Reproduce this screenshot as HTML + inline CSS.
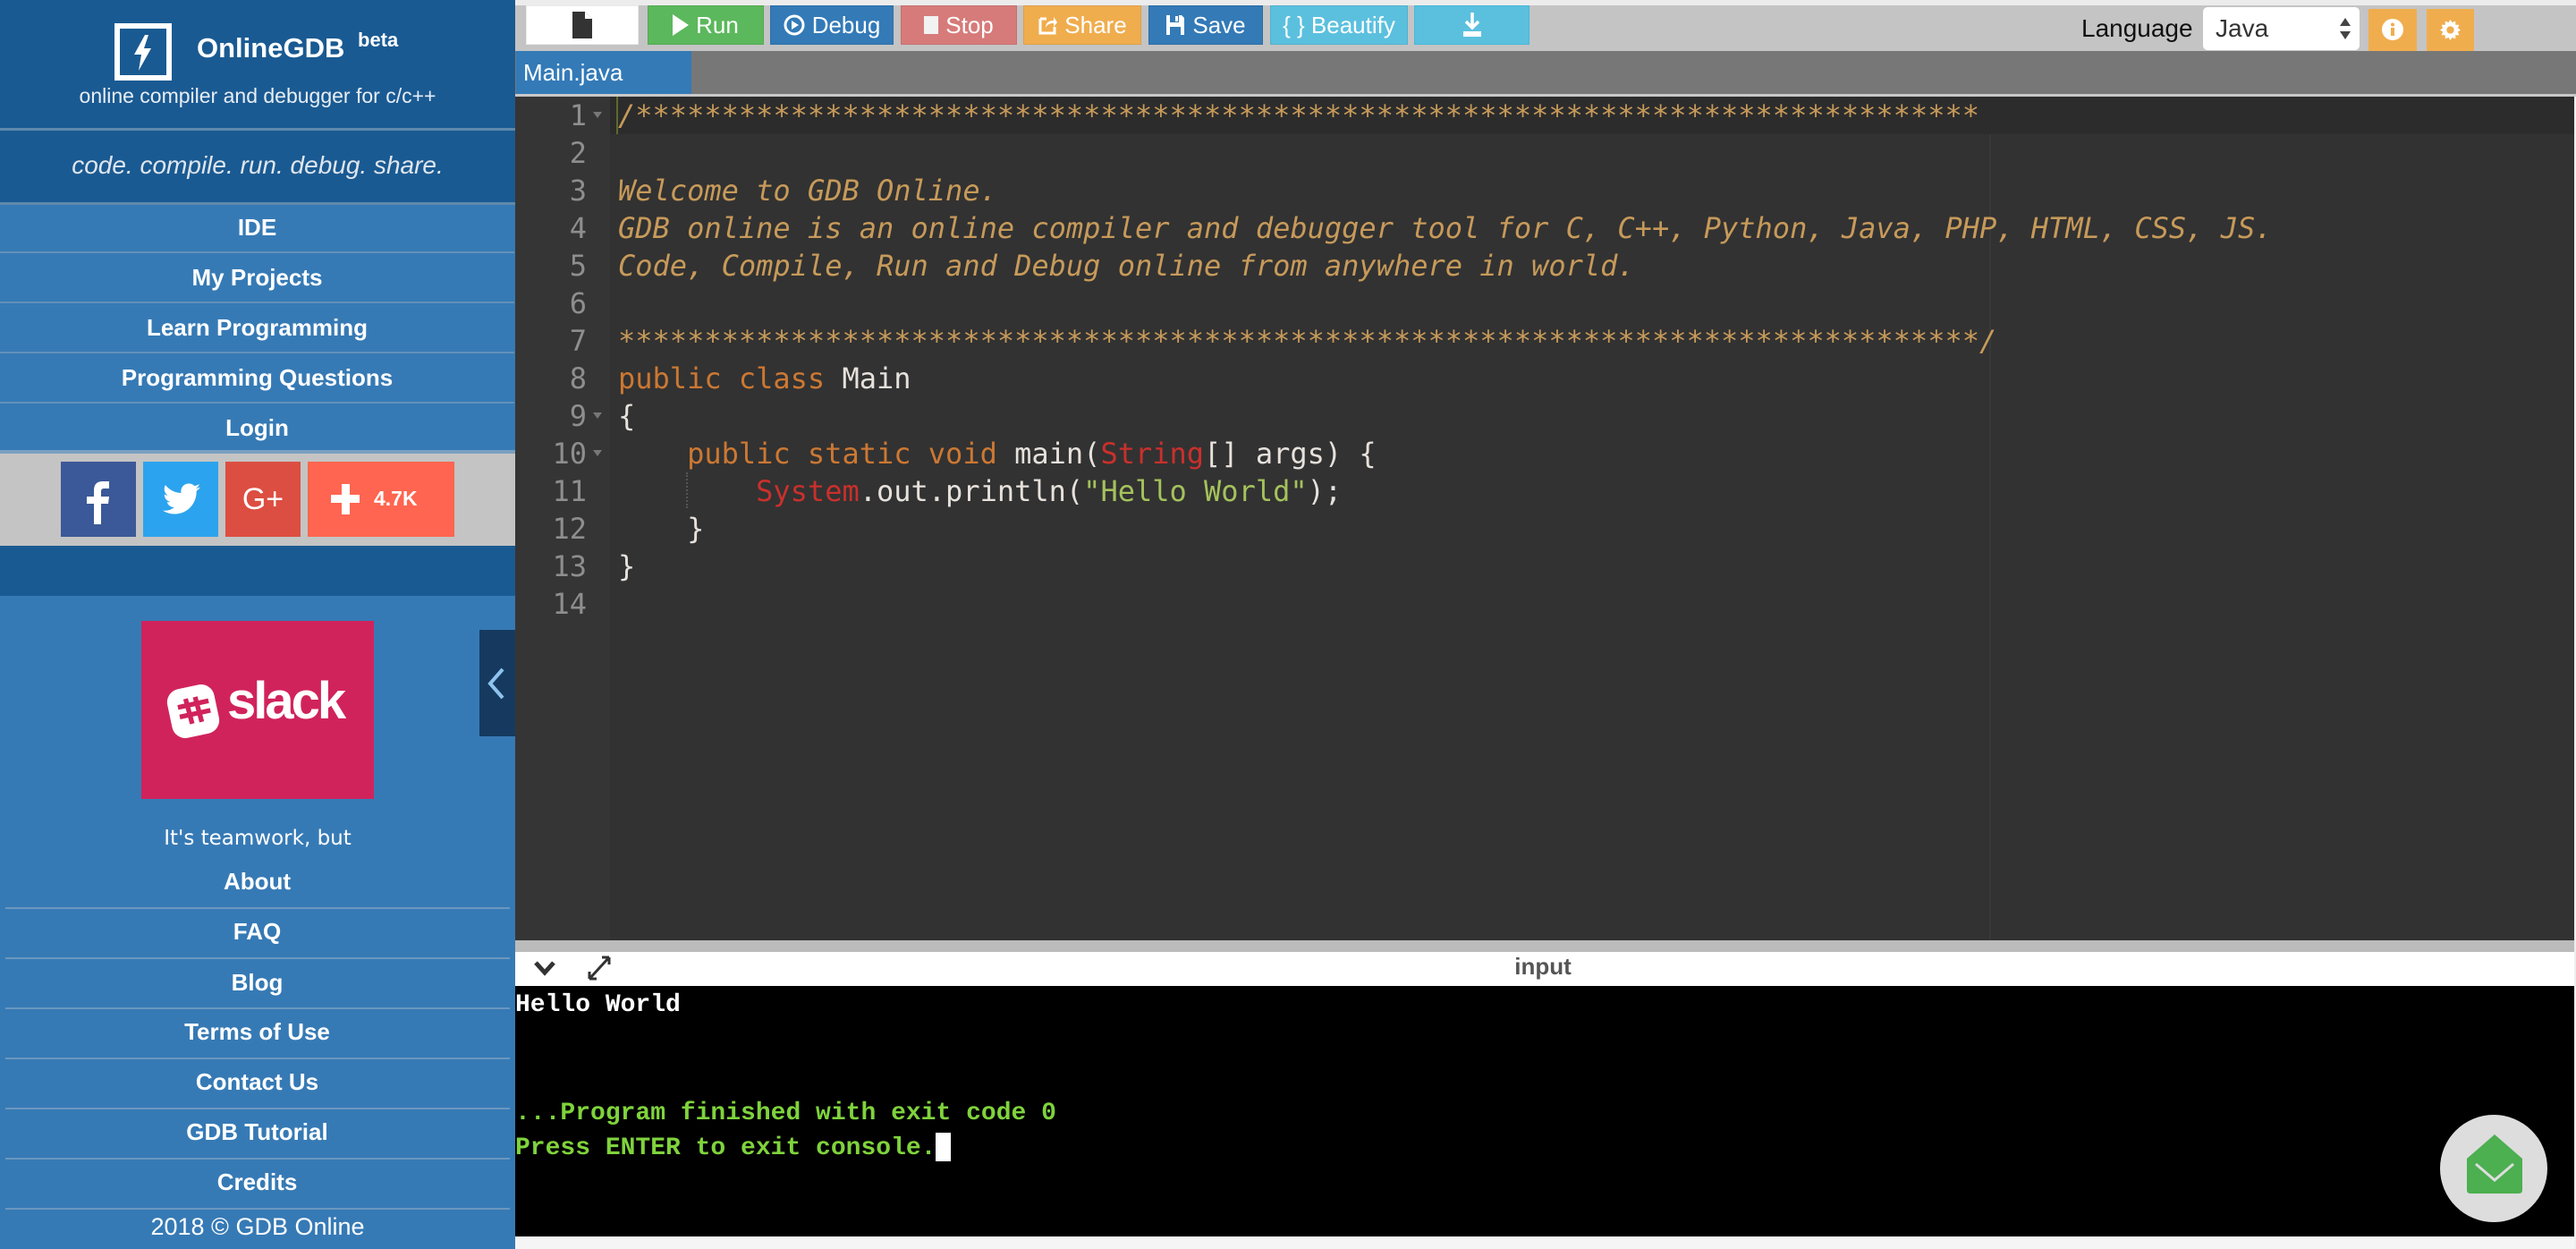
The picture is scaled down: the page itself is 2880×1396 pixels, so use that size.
<!DOCTYPE html>
<html><head><meta charset="utf-8">
<style>
*{margin:0;padding:0;box-sizing:border-box}
body{width:2880px;height:1396px;overflow:hidden;background:#c4c4c4;font-family:"Liberation Sans",Arial,sans-serif;position:relative}
.a{position:absolute}
.btn{position:absolute;top:6px;height:44px;color:#fff;font-size:26px;display:flex;align-items:center;justify-content:center;gap:8px;border:1px solid rgba(0,0,0,.08)}
.mi{position:absolute;left:0;width:575px;height:54px;color:#fff;font-weight:bold;font-size:26px;text-align:center;line-height:50px;border-bottom:2px solid #6390ba}
.bi{position:absolute;left:0;width:575px;color:#fff;font-weight:bold;font-size:26px;text-align:center}
.sep{position:absolute;left:6px;width:564px;height:2px;background:#6b97bf}
.ln{position:absolute;left:577px;width:79px;text-align:right;color:#8e8e8e;font:32px/42px "DejaVu Sans Mono",monospace}
.code{position:absolute;left:691px;font:32px/42px "DejaVu Sans Mono",monospace;white-space:pre;color:#e6e1dc}
.c{color:#c79a5a;font-style:italic}
.k{color:#cc7833}
.r{color:#c9302c}
.s{color:#a5c25c}
.fold{position:absolute;left:663px;width:0;height:0;border-left:5px solid transparent;border-right:5px solid transparent;border-top:7px solid #777}
.con{position:absolute;left:576px;font:bold 28px/40px "Liberation Mono","Courier New",monospace;white-space:pre}
</style></head><body>
<div class="a" style="left:0;top:0;width:2880px;height:6px;background:#ececec"></div>
<div class="btn" style="left:588px;width:126px;background:#fff"><svg width="22" height="30" viewBox="0 0 22 30"><path d="M0 0H14L22 8V30H0Z" fill="#333"/><path d="M14 0V8H22" fill="#fff"/></svg></div>
<div class="btn" style="left:724px;width:130px;background:#5cb85c"><svg width="18" height="24"><path d="M0 0L18 12L0 24Z" fill="#fff"/></svg>Run</div>
<div class="btn" style="left:861px;width:138px;background:#337ab7"><svg width="24" height="24"><circle cx="12" cy="12" r="10" fill="none" stroke="#fff" stroke-width="3"/><path d="M9 7L17 12L9 17Z" fill="#fff"/></svg>Debug</div>
<div class="btn" style="left:1007px;width:130px;background:#d67b7a"><span style="display:inline-block;width:16px;height:20px;background:#f2f2f2"></span>Stop</div>
<div class="btn" style="left:1144px;width:132px;background:#f0ad4e"><svg width="22" height="24"><path d="M3 5H10M3 5V21H19V14" fill="none" stroke="#fff" stroke-width="3"/><path d="M9 15C9 9 13 7 18 7V3L22 9L18 14V10C14 10 11 11 9 15Z" fill="#fff"/></svg>Share</div>
<div class="btn" style="left:1284px;width:128px;background:#337ab7;border-color:#2e6da4"><svg width="22" height="24"><path d="M1 1H18L21 4V23H1Z" fill="#fff"/><rect x="5" y="1" width="10" height="8" fill="#337ab7"/><rect x="11" y="2" width="3" height="6" fill="#fff"/><rect x="5" y="14" width="12" height="9" fill="#337ab7"/></svg>Save</div>
<div class="btn" style="left:1420px;width:154px;background:#5bc0de">{ } Beautify</div>
<div class="btn" style="left:1581px;width:129px;background:#5bc0de;border-color:#46b8da"><svg width="24" height="28"><path d="M12 0V16M5 10L12 17L19 10" fill="none" stroke="#fff" stroke-width="3.5"/><rect x="2" y="21" width="20" height="6" fill="#fff"/></svg></div>
<div class="a" style="left:2327px;top:12px;font-size:28px;color:#111;line-height:40px">Language</div>
<div class="a" style="left:2463px;top:8px;width:175px;height:48px;background:#fff;border-radius:5px;font-size:28px;line-height:48px;padding-left:14px;color:#333">Java<svg class="a" style="right:10px;top:12px" width="12" height="24"><path d="M6 0L12 9H0Z M6 24L12 15H0Z" fill="#444"/></svg></div>
<div class="a" style="left:2648px;top:10px;width:54px;height:47px;background:#f0ad4e"><svg class="a" style="left:15px;top:11px" width="24" height="24"><circle cx="12" cy="12" r="12" fill="#fff"/><rect x="10" y="10" width="4" height="9" fill="#f0ad4e"/><circle cx="12" cy="6.5" r="2" fill="#f0ad4e"/></svg></div>
<div class="a" style="left:2713px;top:10px;width:53px;height:47px;background:#f0ad4e"><svg class="a" style="left:14px;top:11px" width="25" height="25" viewBox="0 0 24 24"><path d="M12 1L14 4L17.5 2.5L17.5 6.5L21.5 6.5L20 10L23 12L20 14L21.5 17.5L17.5 17.5L17.5 21.5L14 20L12 23L10 20L6.5 21.5L6.5 17.5L2.5 17.5L4 14L1 12L4 10L2.5 6.5L6.5 6.5L6.5 2.5L10 4Z" fill="#fff"/><circle cx="12" cy="12" r="4" fill="#f0ad4e"/></svg></div>

<div class="a" style="left:576px;top:57px;width:2304px;height:48px;background:#777"></div>
<div class="a" style="left:577px;top:57px;width:196px;height:48px;background:#337ab7;color:#fff;font-size:26px;line-height:48px;padding-left:8px">Main.java</div>
<div class="a" style="left:576px;top:105px;width:2304px;height:3px;background:#c8c8c8"></div>

<div class="a" style="left:576px;top:108px;width:2302px;height:943px;background:#323232"></div>
<div class="a" style="left:576px;top:108px;width:106px;height:943px;background:#353535"></div>
<div class="a" style="left:682px;top:108px;width:2196px;height:42px;background:#2c2c2c"></div>
<div class="a" style="left:689px;top:108px;width:2px;height:42px;background:#5a6b2a"></div>
<div class="a" style="left:2224px;top:150px;width:2px;height:901px;background:#393939"></div>
<div class="a" style="left:767px;top:528px;width:0;height:40px;border-left:2px dotted #555"></div>

<div class="ln" style="top:108px">1</div>
<div class="ln" style="top:150px">2</div>
<div class="ln" style="top:192px">3</div>
<div class="ln" style="top:234px">4</div>
<div class="ln" style="top:276px">5</div>
<div class="ln" style="top:318px">6</div>
<div class="ln" style="top:360px">7</div>
<div class="ln" style="top:402px">8</div>
<div class="ln" style="top:444px">9</div>
<div class="ln" style="top:486px">10</div>
<div class="ln" style="top:528px">11</div>
<div class="ln" style="top:570px">12</div>
<div class="ln" style="top:612px">13</div>
<div class="ln" style="top:654px">14</div>
<div class="fold" style="top:125px"></div>
<div class="fold" style="top:461px"></div>
<div class="fold" style="top:503px"></div>

<div class="code" style="top:108px"><span class="c">/******************************************************************************</span>

<span class="c">Welcome to GDB Online.</span>
<span class="c">GDB online is an online compiler and debugger tool for C, C++, Python, Java, PHP, HTML, CSS, JS.</span>
<span class="c">Code, Compile, Run and Debug online from anywhere in world.</span>

<span class="c">*******************************************************************************/</span>
<span class="k">public</span> <span class="k">class</span> Main
{
    <span class="k">public</span> <span class="k">static</span> <span class="k">void</span> main(<span class="r">String</span>[] args) {
        <span class="r">System</span>.out.println(<span class="s">"Hello World"</span>);
    }
}
</div>

<div class="a" style="left:576px;top:1051px;width:2304px;height:13px;background:#bbb"></div>
<div class="a" style="left:576px;top:1064px;width:2304px;height:38px;background:#fff"></div>
<svg class="a" style="left:597px;top:1074px" width="24" height="18"><path d="M2 2L12 13L22 2" fill="none" stroke="#333" stroke-width="5"/></svg>
<svg class="a" style="left:655px;top:1066px" width="30" height="32"><path d="M4 28L26 4M26 4H18M26 4V12M4 28V20M4 28H12" fill="none" stroke="#333" stroke-width="3"/></svg>
<div class="a" style="left:1680px;top:1062px;width:90px;text-align:center;font-size:26px;line-height:36px;color:#555;font-weight:bold">input</div>
<div class="a" style="left:576px;top:1102px;width:2302px;height:280px;background:#000"></div>
<div class="a" style="left:0;top:1382px;width:2880px;height:14px;background:#f5f5f5"></div>
<div class="a" style="left:2878px;top:108px;width:2px;height:1288px;background:#eee"></div>
<div class="con" style="top:1104px;color:#fff">Hello World</div>
<div class="con" style="top:1225px;color:#7fd33c">...Program finished with exit code 0</div>
<div class="con" style="top:1264px;color:#7fd33c">Press ENTER to exit console.</div>
<div class="a" style="left:1046px;top:1266px;width:17px;height:32px;background:#fff"></div>
<div class="a" style="left:2728px;top:1246px;width:120px;height:120px;border-radius:50%;background:#ddd"></div>
<svg class="a" style="left:2758px;top:1268px" width="62" height="66"><path d="M0 27L31 0L62 27V62Q62 66 58 66H4Q0 66 0 62Z" fill="#4caf50"/><path d="M10 33L31 51L52 33" fill="none" stroke="#ddd" stroke-width="3"/></svg>

<div class="a" style="left:0;top:0;width:576px;height:1396px;background:#367ab5"></div>
<div class="a" style="left:0;top:0;width:576px;height:227px;background:#1a5a92"></div>
<div class="a" style="left:0;top:143px;width:576px;height:3px;background:#5f89ab"></div>
<div class="a" style="left:128px;top:26px;width:64px;height:64px;border:6px solid #fff"></div>
<svg class="a" style="left:147px;top:39px" width="26" height="40"><path d="M15 0L3 22H11L8 40L22 15H14L19 0Z" fill="#fff"/></svg>
<div class="a" style="left:220px;top:36px;font-size:31px;font-weight:bold;color:#fff">OnlineGDB</div>
<div class="a" style="left:400px;top:32px;font-size:22px;font-weight:bold;color:#fff">beta</div>
<div class="a" style="left:0;top:94px;width:576px;text-align:center;font-size:23px;color:#e8eef5">online compiler and debugger for c/c++</div>
<div class="a" style="left:0;top:169px;width:576px;text-align:center;font-size:28px;font-style:italic;color:#dfe6ee">code. compile. run. debug. share.</div>
<div class="a" style="left:0;top:226px;width:576px;height:3px;background:#5f89ab"></div>
<div class="mi" style="top:229px">IDE</div>
<div class="mi" style="top:285px">My Projects</div>
<div class="mi" style="top:341px">Learn Programming</div>
<div class="mi" style="top:397px">Programming Questions</div>
<div class="mi" style="top:453px;border-bottom:none">Login</div>
<div class="a" style="left:0;top:503px;width:576px;height:4px;background:#7aa0c0"></div>
<div class="a" style="left:0;top:507px;width:576px;height:103px;background:#c4c4c4"></div>
<div class="a" style="left:68px;top:516px;width:84px;height:84px;background:#3b5998"><svg class="a" style="left:27px;top:20px" width="30" height="50"><path d="M10 50V27H2V19H10V12Q10 2 20 2H27V10H21Q18 10 18 13V19H27L26 27H18V50Z" fill="#fff"/></svg></div>
<div class="a" style="left:160px;top:516px;width:84px;height:84px;background:#2ca3ee"><svg class="a" style="left:22px;top:24px" width="42" height="36" viewBox="0 0 24 20"><path d="M24 2.3C23.1 2.7 22.2 3 21.2 3.1 22.2 2.5 23 1.5 23.4.3 22.4.9 21.4 1.3 20.3 1.5 19.3.5 18 0 16.5 0 13.8 0 11.6 2.2 11.6 4.9 11.6 5.3 11.6 5.7 11.7 6 7.6 5.8 4 3.9 1.7.9 1.2 1.6 1 2.5 1 3.4 1 5.1 1.8 6.6 3.2 7.5 2.4 7.5 1.6 7.2 1 6.9 1 9.3 2.7 11.3 4.9 11.7 4.5 11.8 4 11.9 3.6 11.9 3.3 11.9 3 11.9 2.7 11.8 3.3 13.8 5.1 15.2 7.3 15.2 5.6 16.5 3.5 17.3 1.2 17.3.8 17.3.4 17.3 0 17.2 2.2 18.6 4.8 19.4 7.5 19.4 16.5 19.4 21.5 11.9 21.5 5.4V4.8C22.5 4.1 23.3 3.2 24 2.3Z" fill="#fff"/></svg></div>
<div class="a" style="left:252px;top:516px;width:84px;height:84px;background:#dc4e41;color:#fff;font-size:34px;text-align:center;line-height:84px">G+</div>
<div class="a" style="left:344px;top:516px;width:164px;height:84px;background:#ff6550;color:#fff"><div class="a" style="left:26px;top:37px;width:32px;height:9px;background:#fff"></div><div class="a" style="left:38px;top:25px;width:9px;height:34px;background:#fff"></div><div class="a" style="left:74px;top:28px;font-size:23px;font-weight:bold">4.7K</div></div>
<div class="a" style="left:0;top:610px;width:576px;height:56px;background:#1a5a92"></div>
<div class="a" style="left:158px;top:694px;width:260px;height:199px;background:#d0235c"></div>
<svg class="a" style="left:186px;top:764px" width="60" height="62" viewBox="0 0 56 58"><rect x="3" y="3" width="50" height="52" rx="14" transform="rotate(-12 28 29)" fill="#fff"/><path d="M20 16L27 42M30 14L37 40M12 25L44 18M14 35L46 28" stroke="#d0235c" stroke-width="5"/></svg>
<div class="a" style="left:254px;top:750px;font-size:58px;font-weight:bold;color:#fff;font-family:'Liberation Sans',sans-serif;letter-spacing:-3px">slack</div>
<div class="a" style="left:536px;top:704px;width:40px;height:119px;background:#163a5f"><svg class="a" style="left:8px;top:42px" width="22" height="36"><path d="M18 2L4 18L18 34" fill="none" stroke="#8ec3ee" stroke-width="4"/></svg></div>
<div class="a" style="left:0;top:924px;width:576px;text-align:center;font-size:23px;color:#fff;font-family:'DejaVu Sans',sans-serif">It's teamwork, but</div>
<div class="bi" style="top:970px">About</div>
<div class="sep" style="top:1014px"></div>
<div class="bi" style="top:1026px">FAQ</div>
<div class="sep" style="top:1070px"></div>
<div class="bi" style="top:1083px">Blog</div>
<div class="sep" style="top:1126px"></div>
<div class="bi" style="top:1138px">Terms of Use</div>
<div class="sep" style="top:1182px"></div>
<div class="bi" style="top:1194px">Contact Us</div>
<div class="sep" style="top:1238px"></div>
<div class="bi" style="top:1250px">GDB Tutorial</div>
<div class="sep" style="top:1294px"></div>
<div class="bi" style="top:1306px">Credits</div>
<div class="sep" style="top:1350px"></div>
<div class="a" style="left:0;top:1356px;width:576px;text-align:center;font-size:27px;color:#fff">2018 © GDB Online</div>
</body></html>
